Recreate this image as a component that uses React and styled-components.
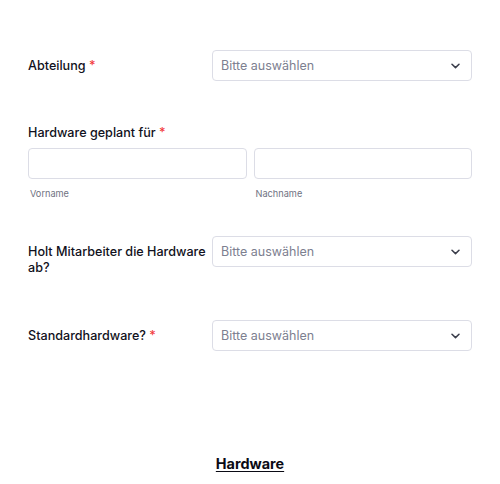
import React from 'react';
import styled, { createGlobalStyle } from 'styled-components';

const GlobalStyle = createGlobalStyle`
  body {
    margin: 0;
    background: #fff;
    font-family: Inter, "Noto Sans", sans-serif;
    color: #0a0a14;
  }
`;

function Chevron() {
  return (
    <svg width="9" height="6" viewBox="0 0 9 6" fill="none">
      <path d="M1 1.2 L4.5 4.6 L8 1.2" stroke="#3a3d4a" strokeWidth="1.5" strokeLinecap="round" strokeLinejoin="round" />
    </svg>
  );
}

function Select() {
  return (
    <SelectBox>
      <Placeholder>Bitte auswählen</Placeholder>
      <Chevron />
    </SelectBox>
  );
}

export default function App() {
  return (
    <>
      <GlobalStyle />
      <Form>
        <Row $top={50}>
          <Label>Abteilung <Req>*</Req></Label>
          <Select />
        </Row>

        <Stack $top={44}>
          <Label>Hardware geplant für <Req>*</Req></Label>
          <NameRow>
            <NameCol>
              <Input />
              <SubLabel>Vorname</SubLabel>
            </NameCol>
            <NameCol>
              <Input />
              <SubLabel>Nachname</SubLabel>
            </NameCol>
          </NameRow>
        </Stack>

        <Row $top={36}>
          <Label>Holt Mitarbeiter die Hardware ab?</Label>
          <Select />
        </Row>

        <Row $top={44}>
          <Label>Standardhardware? <Req>*</Req></Label>
          <Select />
        </Row>

        <Heading>Hardware</Heading>
      </Form>
    </>
  );
}

const Form = styled.main`
  padding: 0 28px;
  display: flex;
  flex-direction: column;
`;
const Row = styled.div`
  display: flex;
  align-items: flex-start;
  margin-top: ${(p) => p.$top}px;
`;
const Stack = styled.div`
  display: flex;
  flex-direction: column;
  margin-top: ${(p) => p.$top}px;
`;
const Label = styled.label`
  width: 184px;
  flex-shrink: 0;
  padding: 8px 4px 0 0;
  box-sizing: border-box;
  font-size: 12.6px;
  line-height: 16px;
  font-weight: 500;
  color: #111120;
  ${Stack} & {
    width: auto;
    padding: 0;
  }
`;
const Req = styled.span`
  color: #f23a3c;
`;
const SelectBox = styled.div`
  flex: 1;
  height: 31px;
  box-sizing: border-box;
  border: 1px solid #dcdde6;
  border-radius: 4px;
  display: flex;
  align-items: center;
  justify-content: space-between;
  padding: 0 11px 0 8px;
  background: #fff;
`;
const Placeholder = styled.span`
  font-size: 12.5px;
  color: #7d8090;
`;
const NameRow = styled.div`
  display: flex;
  gap: 7px;
  margin-top: 7px;
`;
const NameCol = styled.div`
  flex: 1;
  display: flex;
  flex-direction: column;
`;
const Input = styled.div`
  height: 31px;
  box-sizing: border-box;
  border: 1px solid #dcdde6;
  border-radius: 4px;
`;
const SubLabel = styled.span`
  margin-top: 9px;
  padding-left: 2px;
  font-size: 9.2px;
  line-height: 12px;
  color: #6f7282;
`;
const Heading = styled.h2`
  margin: 104px 0 0;
  text-align: center;
  font-size: 14.4px;
  line-height: 18px;
  font-weight: 700;
  text-decoration: underline;
  text-underline-offset: 2px;
  color: #0a0a14;
`;
